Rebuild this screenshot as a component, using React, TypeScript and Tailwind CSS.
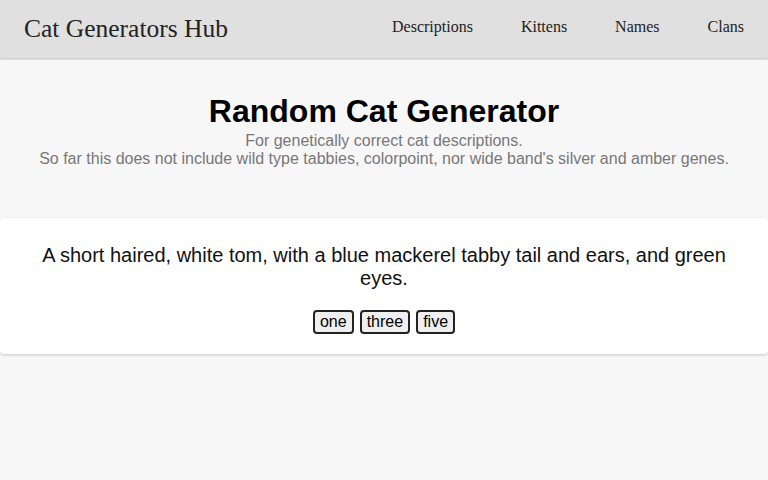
const links = ['Descriptions', 'Kittens', 'Names', 'Clans'];

export default function App() {
  return (
    <div className="min-h-[480px] bg-[#f7f7f7] font-['Liberation_Sans',Arial,sans-serif]">
      <header className="h-[58px] bg-[#e0e0e0] flex items-center justify-between pl-6 pr-6 shadow-[0_1px_2px_rgba(0,0,0,0.25)] font-['Liberation_Serif','Times_New_Roman',serif] text-[#222]">
        <div className="text-[25.5px] leading-none">Cat Generators Hub</div>
        <nav className="flex gap-12 text-base -mt-[5px]">
          {links.map(l => (
            <a key={l} className="cursor-pointer">{l}</a>
          ))}
        </nav>
      </header>

      <section className="text-center pt-[35px]">
        <h1 className="text-[32px] font-bold leading-9 text-black">Random Cat Generator</h1>
        <p className="text-base leading-[18px] text-[#777] mt-[3px]">For genetically correct cat descriptions.</p>
        <p className="text-base leading-[18px] text-[#777]">
          So far this does not include wild type tabbies, colorpoint, nor wide band's silver and amber genes.
        </p>
      </section>

      <div className="mt-[50px] bg-white rounded-sm shadow-[0_1px_3px_rgba(0,0,0,0.2)] px-10 pt-[26px] pb-[20px] text-center">
        <p className="text-[20px] leading-[23px] text-[#111]">
          A short haired, white tom, with a blue mackerel tabby tail and ears, and green eyes.
        </p>
        <div className="flex justify-center gap-[6px] mt-[20px]">
          {['one', 'three', 'five'].map(b => (
            <button
              key={b}
              className="px-[5px] h-[24px] text-base leading-none text-black bg-[#efefef] border-2 border-[#222] rounded-[4px]"
            >
              {b}
            </button>
          ))}
        </div>
      </div>
    </div>
  );
}
